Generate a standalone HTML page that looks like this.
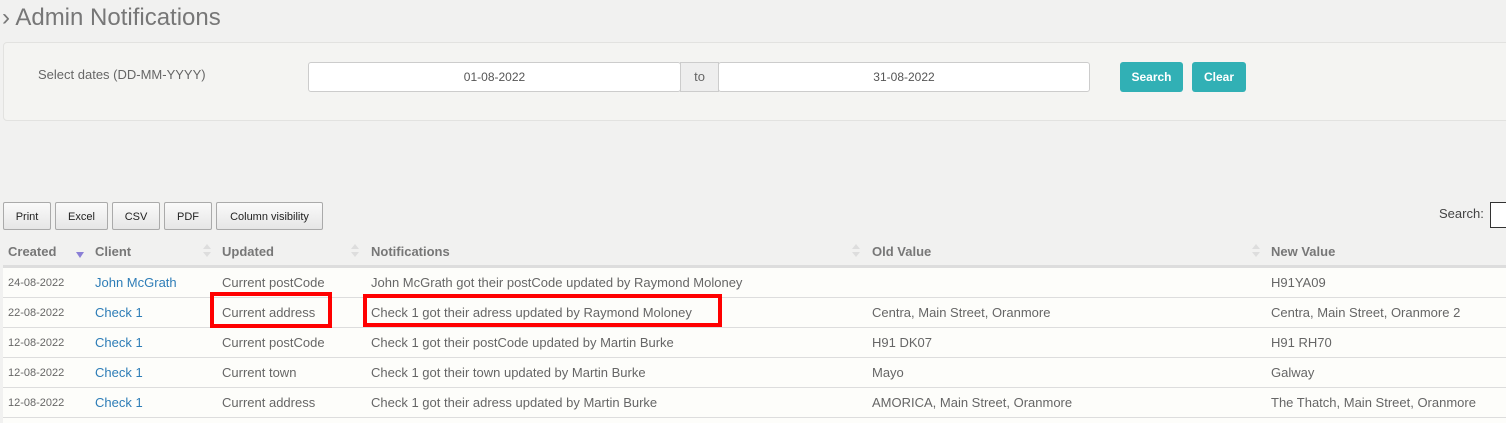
<!DOCTYPE html><html><head><style>
body{margin:0;width:1506px;height:423px;background:#f1f1f0;font-family:"Liberation Sans",sans-serif;position:relative;overflow:hidden;color:#666}
.a{position:absolute;white-space:nowrap}
.btn{position:absolute;top:202px;height:28px;border:1px solid #aaa;border-radius:2px;background:linear-gradient(#fafafa,#e6e6e6);font-size:11px;color:#222;line-height:28px;text-align:center;box-sizing:border-box}
.inp{position:absolute;top:62px;height:30px;background:#fff;border:1px solid #ccc;border-radius:3px;box-sizing:border-box;font-size:12px;color:#555;text-align:center;line-height:28px}
.tb{position:absolute;top:62px;height:30px;background:#31b0b5;border-radius:3px;color:#fff;font-size:12px;font-weight:bold;line-height:30px;text-align:center}
.th{position:absolute;top:244px;font-size:13px;font-weight:bold;color:#777}
.row{position:absolute;left:3px;width:1503px;height:29px;background:#fdfdfa;border-bottom:1px solid #ddd;font-size:13px;color:#666}
.row span{position:absolute;top:7px;white-space:nowrap}
.row .d{font-size:11px;left:5px;top:9px}
.row .c{color:#2e7db7;left:92px}
.s{position:absolute;top:244px;width:0;height:0;border-left:4px solid transparent;border-right:4px solid transparent}
</style></head><body>
<div class="a" style="left:2px;top:4px;font-size:24px;color:#777">› Admin Notifications</div>
<div class="a" style="left:3px;top:42px;width:1510px;height:79px;background:#f4f4f2;border:1px solid #e2e2e0;border-radius:4px;box-sizing:border-box"></div>
<div class="a" style="left:38px;top:67px;font-size:13px;color:#666">Select dates (DD-MM-YYYY)</div>
<div class="inp" style="left:308px;width:373px">01-08-2022</div>
<div class="a" style="left:680px;top:62px;width:39px;height:30px;background:#eee;border:1px solid #ccc;box-sizing:border-box;text-align:center;line-height:28px;font-size:13px;color:#666">to</div>
<div class="inp" style="left:718px;width:372px">31-08-2022</div>
<div class="tb" style="left:1120px;width:63px">Search</div>
<div class="tb" style="left:1192px;width:54px">Clear</div>
<div class="btn" style="left:3px;width:48px">Print</div>
<div class="btn" style="left:55px;width:53px">Excel</div>
<div class="btn" style="left:112px;width:48px">CSV</div>
<div class="btn" style="left:164px;width:48px">PDF</div>
<div class="btn" style="left:216px;width:107px">Column visibility</div>
<div class="a" style="left:1439px;top:206px;font-size:13px;color:#444">Search:</div>
<div class="a" style="left:1490px;top:202px;width:20px;height:24px;border:1px solid #333;background:#fff"></div>
<div class="th" style="left:8px">Created</div><div class="th" style="left:95px">Client</div><div class="th" style="left:222px">Updated</div><div class="th" style="left:371px">Notifications</div><div class="th" style="left:872px">Old Value</div><div class="th" style="left:1271px">New Value</div>
<div class="s" style="left:76px;top:252px;border-top:6px solid #8a7fd6"></div>
<div class="s" style="left:203px;border-bottom:5px solid #ddd"></div><div class="s" style="left:203px;top:252px;border-top:5px solid #ddd"></div>
<div class="s" style="left:351px;border-bottom:5px solid #ddd"></div><div class="s" style="left:351px;top:252px;border-top:5px solid #ddd"></div>
<div class="s" style="left:852px;border-bottom:5px solid #ddd"></div><div class="s" style="left:852px;top:252px;border-top:5px solid #ddd"></div>
<div class="s" style="left:1252px;border-bottom:5px solid #ddd"></div><div class="s" style="left:1252px;top:252px;border-top:5px solid #ddd"></div>
<div class="a" style="left:3px;top:265px;width:1503px;height:3px;background:#ddd"></div>
<div class="row" style="top:268px"><span class="d">24-08-2022</span><span class="c">John McGrath</span><span style="left:219px">Current postCode</span><span style="left:368px">John McGrath got their postCode updated by Raymond Moloney</span><span style="left:1268px">H91YA09</span></div>
<div class="row" style="top:298px"><span class="d">22-08-2022</span><span class="c">Check 1</span><span style="left:219px">Current address</span><span style="left:368px">Check 1 got their adress updated by Raymond Moloney</span><span style="left:869px">Centra, Main Street, Oranmore</span><span style="left:1268px">Centra, Main Street, Oranmore 2</span></div>
<div class="row" style="top:328px"><span class="d">12-08-2022</span><span class="c">Check 1</span><span style="left:219px">Current postCode</span><span style="left:368px">Check 1 got their postCode updated by Martin Burke</span><span style="left:869px">H91 DK07</span><span style="left:1268px">H91 RH70</span></div>
<div class="row" style="top:358px"><span class="d">12-08-2022</span><span class="c">Check 1</span><span style="left:219px">Current town</span><span style="left:368px">Check 1 got their town updated by Martin Burke</span><span style="left:869px">Mayo</span><span style="left:1268px">Galway</span></div>
<div class="row" style="top:388px"><span class="d">12-08-2022</span><span class="c">Check 1</span><span style="left:219px">Current address</span><span style="left:368px">Check 1 got their adress updated by Martin Burke</span><span style="left:869px">AMORICA, Main Street, Oranmore</span><span style="left:1268px">The Thatch, Main Street, Oranmore</span></div>
<div class="a" style="left:3px;top:418px;width:1503px;height:5px;background:#fdfdfa"></div>
<div class="a" style="left:210px;top:292px;width:122px;height:36px;border:4px solid #f00;box-sizing:border-box"></div>
<div class="a" style="left:363px;top:294px;width:359px;height:33px;border:4px solid #f00;box-sizing:border-box"></div>
</body></html>
